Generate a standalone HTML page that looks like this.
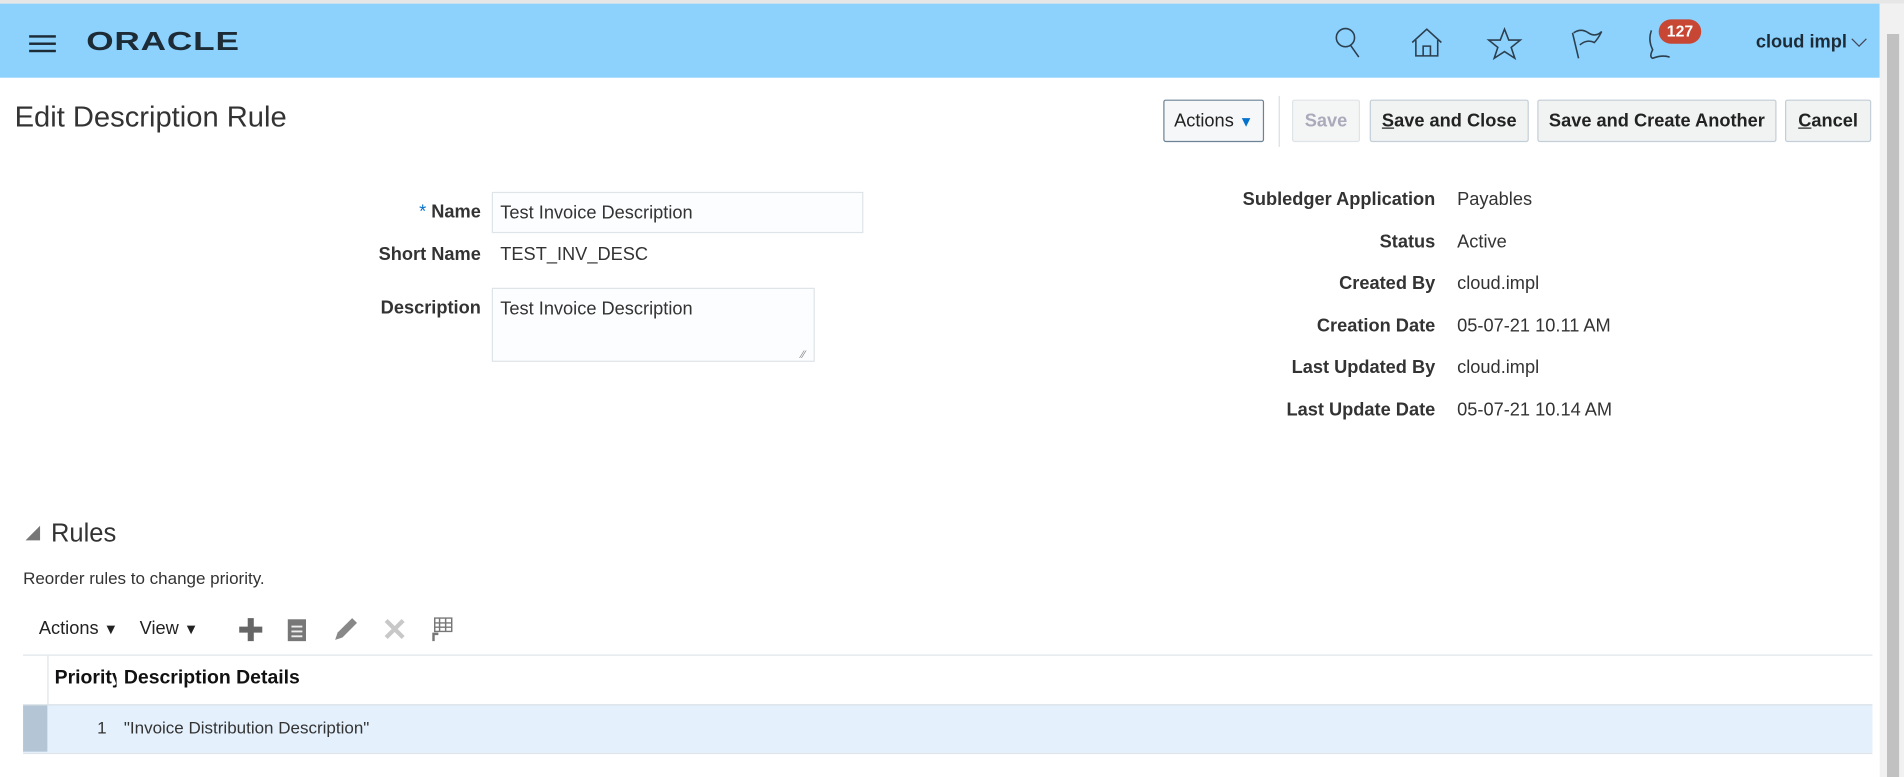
<!DOCTYPE html>
<html><head><meta charset="utf-8"><style>
html,body{margin:0;padding:0;width:1904px;height:776px;overflow:hidden;background:#fff;font-family:"Liberation Sans",Arial,sans-serif;}
#w{position:absolute;left:0;top:0;width:1568px;height:640px;transform:scale(1.21429);transform-origin:0 0;}
.a{position:absolute;white-space:nowrap;}
.hdr{position:absolute;left:0;top:3px;width:1548px;height:61px;background:#8dd1fd;}
.btn{position:absolute;top:82px;background:#f1f3f3;border:1px solid #c4ced7;border-radius:2px;font-size:15px;font-weight:bold;color:#222;text-align:center;line-height:33px;box-sizing:border-box;height:35px}
.lbl{position:absolute;font-size:15px;font-weight:bold;color:#333;text-align:right;white-space:nowrap}
.val{position:absolute;font-size:15px;color:#333;white-space:nowrap}
</style></head><body><div id="w">
<div class="a" style="left:0;top:0;width:1568px;height:3px;background:#e6e6e6"></div>
<div class="hdr"></div>
<div class="a" style="left:1548px;top:3px;width:20px;height:637px;background:#f1f1f1"></div>
<div class="a" style="left:1554px;top:28px;width:10px;height:612px;background:#c1c1c1"></div>
<div class="a" style="left:24px;top:29px;width:22px;height:2px;background:#1c2b36;box-shadow:0 6px 0 #1c2b36,0 12px 0 #1c2b36"></div>
<div class="a" style="left:71px;top:23px;font-size:21px;font-weight:bold;letter-spacing:0.5px;color:#1c2b36;transform:scaleX(1.38);transform-origin:0 0">ORACLE</div>
<svg class="a" style="left:1095px;top:17px" width="300" height="36" fill="none" stroke="#2c3f4e" stroke-width="1.3">
<circle cx="13" cy="14" r="7.5"/><path d="M17 20l7 10"/>
<path d="M68 18l12-11 12 11M71 16v13h18V16M77 29v-8h6v8"/>
<path d="M144 7l3.5 9h9.5l-7.5 6 3 9-8.5-5.5-8.5 5.5 3-9-7.5-6h9.5z"/>
<path d="M200 10l5 21M201 10q6-4 12 0t11 -1q-3 6-6 9q-6 -3-12 2"/>
<path d="M265 8q-3 8 1 16q-3 6 0 7q8-3 14-1"/>
</svg>
<div class="a" style="left:1366px;top:16px;width:35px;height:20px;border-radius:10px;background:#c74634;color:#fff;font-size:13px;font-weight:bold;text-align:center;line-height:20px">127</div>
<div class="a" style="left:1446px;top:26px;font-size:15px;font-weight:bold;color:#1c2b36">cloud impl</div>
<svg class="a" style="left:1524px;top:30px" width="14" height="10"><path d="M1 2l6 6 6-6" stroke="#445" fill="none"/></svg>
<div class="a" style="left:12px;top:83px;font-size:24px;color:#333">Edit Description Rule</div>
<div class="btn" style="left:958px;width:83px;background:#f5f7f8;border-color:#6d8395;font-weight:normal;">Actions <span style="color:#0572ce;font-size:12px">&#9660;</span></div>
<div class="a" style="left:1053px;top:79px;width:1px;height:42px;background:#d6dfe6"></div>
<div class="btn" style="left:1064px;width:56px;color:#aab;background:#f4f5f5;border-color:#dfe4e8">Save</div>
<div class="btn" style="left:1128px;width:131px"><u>S</u>ave and Close</div>
<div class="btn" style="left:1266px;width:197px">Save and Create Another</div>
<div class="btn" style="left:1470px;width:71px"><u>C</u>ancel</div>
<div class="lbl" style="right:1172px;top:166px"><span style="color:#0572ce;font-weight:normal">*</span> Name</div>
<div class="a" style="left:405px;top:158px;width:306px;height:34px;border:1px solid #dfe4e8;background:#fcfdfe;box-sizing:border-box"></div>
<div class="val" style="left:412px;top:167px">Test Invoice Description</div>
<div class="lbl" style="right:1172px;top:201px">Short Name</div>
<div class="val" style="left:412px;top:201px">TEST_INV_DESC</div>
<div class="lbl" style="right:1172px;top:245px">Description</div>
<div class="a" style="left:405px;top:237px;width:266px;height:61px;border:1px solid #dfe4e8;background:#fcfdfe;box-sizing:border-box"></div>
<div class="val" style="left:412px;top:246px">Test Invoice Description</div>
<div class="a" style="left:660px;top:287px;font-size:9px;color:#888">&#8725;&#8725;</div>
<div class="lbl" style="right:386px;top:156px">Subledger Application</div><div class="val" style="left:1200px;top:156px">Payables</div>
<div class="lbl" style="right:386px;top:191px">Status</div><div class="val" style="left:1200px;top:191px">Active</div>
<div class="lbl" style="right:386px;top:225px">Created By</div><div class="val" style="left:1200px;top:225px">cloud.impl</div>
<div class="lbl" style="right:386px;top:260px">Creation Date</div><div class="val" style="left:1200px;top:260px">05-07-21 10.11 AM</div>
<div class="lbl" style="right:386px;top:294px">Last Updated By</div><div class="val" style="left:1200px;top:294px">cloud.impl</div>
<div class="lbl" style="right:386px;top:329px">Last Update Date</div><div class="val" style="left:1200px;top:329px">05-07-21 10.14 AM</div>
<svg class="a" style="left:20px;top:432px" width="14" height="14"><path d="M13 1V13H1z" fill="#777"/></svg>
<div class="a" style="left:42px;top:428px;font-size:21px;color:#333">Rules</div>
<div class="a" style="left:19px;top:468px;font-size:14px;color:#333">Reorder rules to change priority.</div>
<div class="a" style="left:32px;top:509px;font-size:15px;color:#222">Actions <span style="font-size:12px">&#9660;</span></div>
<div class="a" style="left:115px;top:509px;font-size:15px;color:#222">View <span style="font-size:12px">&#9660;</span></div>
<svg class="a" style="left:196px;top:506px" width="190" height="24">
<path d="M8 3h5v7h7v5h-7v7H8v-7H1v-5h7z" fill="#666"/>
<rect x="41" y="4" width="15" height="18" fill="#777"/><path d="M44 10h9M44 14h9M44 18h9" stroke="#eee" stroke-width="1.5"/>
<path d="M80 21l2-6 12-12 4 4-12 12z" fill="#888"/>
<path d="M122 5l14 14M136 5l-14 14" stroke="#c8c8c8" stroke-width="3.5"/>
<path d="M162 3h14v11h-14zM162 7h14M162 10.5h14M166 3v11M171 3v11" stroke="#777" fill="none" stroke-width="1.2"/><path d="M161 22v-6h4" stroke="#777" fill="none" stroke-width="2"/>
</svg>
<div class="a" style="left:19px;top:539px;width:1523px;height:1px;background:#dfe4e8"></div>
<div class="a" style="left:39px;top:540px;width:1px;height:40px;background:#dfe4e8"></div>
<div class="a" style="left:45px;top:550px;font-size:16px;font-weight:bold;color:#111;width:51px;overflow:hidden">Priority</div>
<div class="a" style="left:102px;top:550px;font-size:16px;font-weight:bold;color:#111">Description Details</div>
<div class="a" style="left:19px;top:580px;width:1523px;height:39px;background:#e4f0fc;border-top:1px solid #d6dfe6"></div>
<div class="a" style="left:19px;top:581px;width:20px;height:38px;background:#b4c6d6"></div>
<div class="a" style="left:80px;top:591px;font-size:14px;color:#333">1</div>
<div class="a" style="left:102px;top:591px;font-size:14px;color:#333">"Invoice Distribution Description"</div>
<div class="a" style="left:19px;top:620px;width:1523px;height:1px;background:#dfe4e8"></div>
</div></body></html>
